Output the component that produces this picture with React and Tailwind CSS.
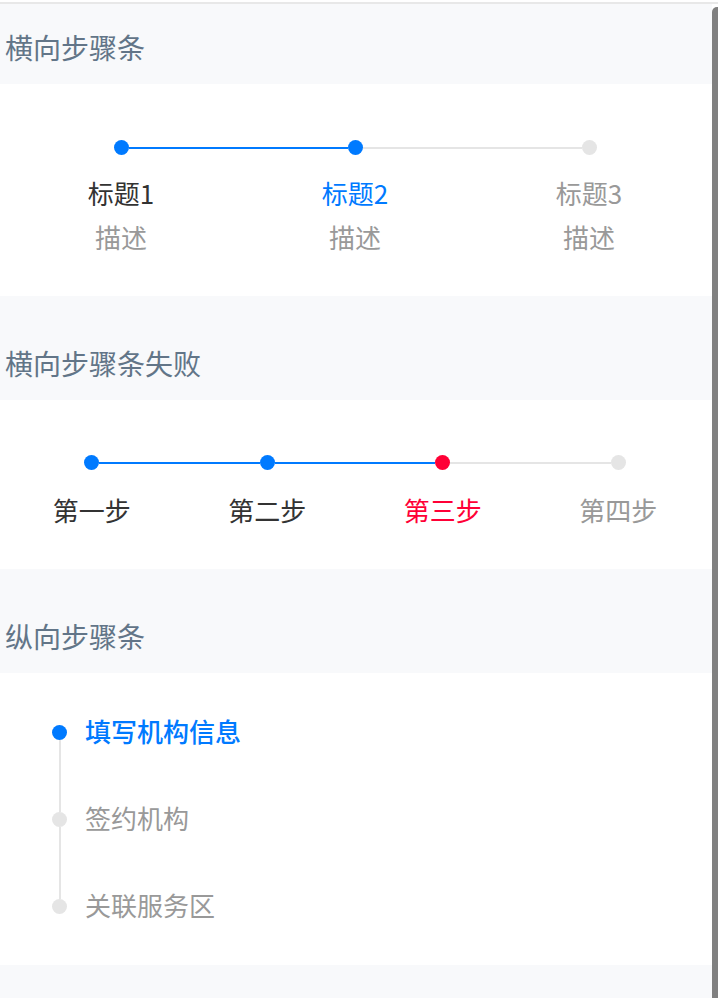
import React from "react";

const FONT = { fontFamily: '"Noto Sans CJK SC", "Noto Sans", sans-serif' };

function Header({ title, first }) {
  return (
    <div
      className={
        "bg-[#f8f9fb] pl-[5px] pb-[17px] " + (first ? "pt-[23px]" : "pt-[47px]")
      }
    >
      <div className="text-[28px] leading-[40px] text-[#627588]">{title}</div>
    </div>
  );
}

function HStep({ label, desc, dot, left, right, labelColor }) {
  return (
    <div className="flex-1 flex flex-col items-center">
      <div className="w-full flex items-center h-[15px]">
        <div className={"flex-1 h-[2px] " + (left || "bg-transparent")} />
        <div className={"w-[15px] h-[15px] rounded-full shrink-0 " + dot} />
        <div className={"flex-1 h-[2px] " + (right || "bg-transparent")} />
      </div>
      <div className={"text-[26px] leading-[44px] " + labelColor + " mt-[16px]"}>{label}</div>
      {desc && <div className="text-[26px] leading-[44px] text-[#999999]">{desc}</div>}
    </div>
  );
}

function HStep2({ label, dot, left, right, labelColor }) {
  return (
    <div className="flex-1 flex flex-col items-center">
      <div className="w-full flex items-center h-[15px]">
        <div className={"flex-1 h-[2px] " + (left || "bg-transparent")} />
        <div className={"w-[15px] h-[15px] rounded-full shrink-0 " + dot} />
        <div className={"flex-1 h-[2px] " + (right || "bg-transparent")} />
      </div>
      <div className={"text-[26px] leading-[44px] mt-[18px] " + labelColor}>{label}</div>
    </div>
  );
}

function VRow({ label, active, first, last }) {
  return (
    <div className="flex items-stretch h-[87px]">
      <div className="ml-[52px] w-[15px] flex flex-col items-center">
        <div className={"flex-1 w-[2px] " + (first ? "bg-transparent" : "bg-[#e5e5e5]")} />
        <div
          className={
            "w-[15px] h-[15px] rounded-full shrink-0 " +
            (active ? "bg-[#007aff]" : "bg-[#e5e5e5]")
          }
        />
        <div className={"flex-1 w-[2px] " + (last ? "bg-transparent" : "bg-[#e5e5e5]")} />
      </div>
      <div
        className={
          "ml-[18px] pb-[3px] flex items-center text-[26px] leading-[44px] " +
          (active ? "text-[#007aff] font-medium" : "text-[#999999]")
        }
      >
        {label}
      </div>
    </div>
  );
}

export default function App() {
  return (
    <div className="w-[718px] h-[998px] bg-white overflow-hidden flex flex-col" style={FONT}>
      <div className="h-[2px] bg-white" />
      <div className="h-[2px] bg-[#e8e8e8]" />
      <div className="flex flex-1 min-h-0">
        <div className="flex-1 flex flex-col">
          <Header title="横向步骤条" first />
          <div className="bg-white pt-[56px] pb-[37px] pl-[4px] pr-[6px] flex">
            <HStep label="标题1" desc="描述" dot="bg-[#007aff]" right="bg-[#007aff]" labelColor="text-[#333333]" />
            <HStep label="标题2" desc="描述" dot="bg-[#007aff]" left="bg-[#007aff]" right="bg-[#e5e5e5]" labelColor="text-[#007aff]" />
            <HStep label="标题3" desc="描述" dot="bg-[#e5e5e5]" left="bg-[#e5e5e5]" labelColor="text-[#999999]" />
          </div>

          <Header title="横向步骤条失败" />
          <div className="bg-white pt-[55px] pb-[37px] pl-[4px] pr-[6px] flex">
            <HStep2 label="第一步" dot="bg-[#007aff]" right="bg-[#007aff]" labelColor="text-[#333333]" />
            <HStep2 label="第二步" dot="bg-[#007aff]" left="bg-[#007aff]" right="bg-[#007aff]" labelColor="text-[#333333]" />
            <HStep2 label="第三步" dot="bg-[#ff0036]" left="bg-[#007aff]" right="bg-[#e5e5e5]" labelColor="text-[#ff0036]" />
            <HStep2 label="第四步" dot="bg-[#e5e5e5]" left="bg-[#e5e5e5]" labelColor="text-[#999999]" />
          </div>

          <Header title="纵向步骤条" />
          <div className="bg-white pt-[16px] pb-[15px] flex flex-col">
            <VRow label="填写机构信息" active first />
            <VRow label="签约机构" />
            <VRow label="关联服务区" last />
          </div>
          <div className="flex-1 bg-[#f8f9fb]" />
        </div>
        <div className="w-[6px] flex flex-col">
          <div className="h-[3px]" />
          <div className="flex-1 bg-[#808080] rounded-tl-[5px]" />
        </div>
      </div>
    </div>
  );
}
